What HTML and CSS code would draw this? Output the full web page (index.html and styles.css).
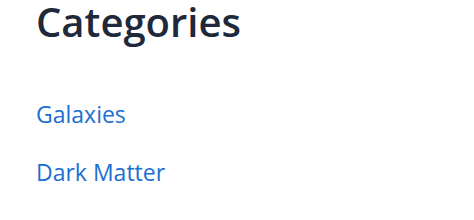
FILE: index.html
```html
<!DOCTYPE html>
<html lang="en">

<head>
    <meta charset="UTF-8">
    <meta name="viewport" content="width=device-width, initial-scale=1.0">
    <title>Categories</title>
    <link rel="stylesheet" href="styles.css">
</head>

<body>

    <div class="categories">
        <h1>Categories</h1>
        <ul class="category-list">
            <li><a href="#">Galaxies</a></li>
            <li><a href="#">Dark Matter</a></li>
        </ul>
    </div>

</body>

</html>
```

FILE: styles.css
```css
body {
    margin: 0;
    background-color: #ffffff;
    font-family: "Open Sans", "Noto Sans", sans-serif;
}

.categories {
    padding: 0 36px;
}

.categories h1 {
    margin: 0;
    font-size: 40px;
    font-weight: 600;
    line-height: 44px;
    color: #1e293b;
}

.category-list {
    list-style: none;
    margin: 0;
    padding: 0;
    padding-top: 57px;
}

.category-list li {
    margin-bottom: 32px;
    font-size: 23px;
    line-height: 26px;
}

.category-list a {
    color: #1b6fd1;
    text-decoration: none;
}
```
